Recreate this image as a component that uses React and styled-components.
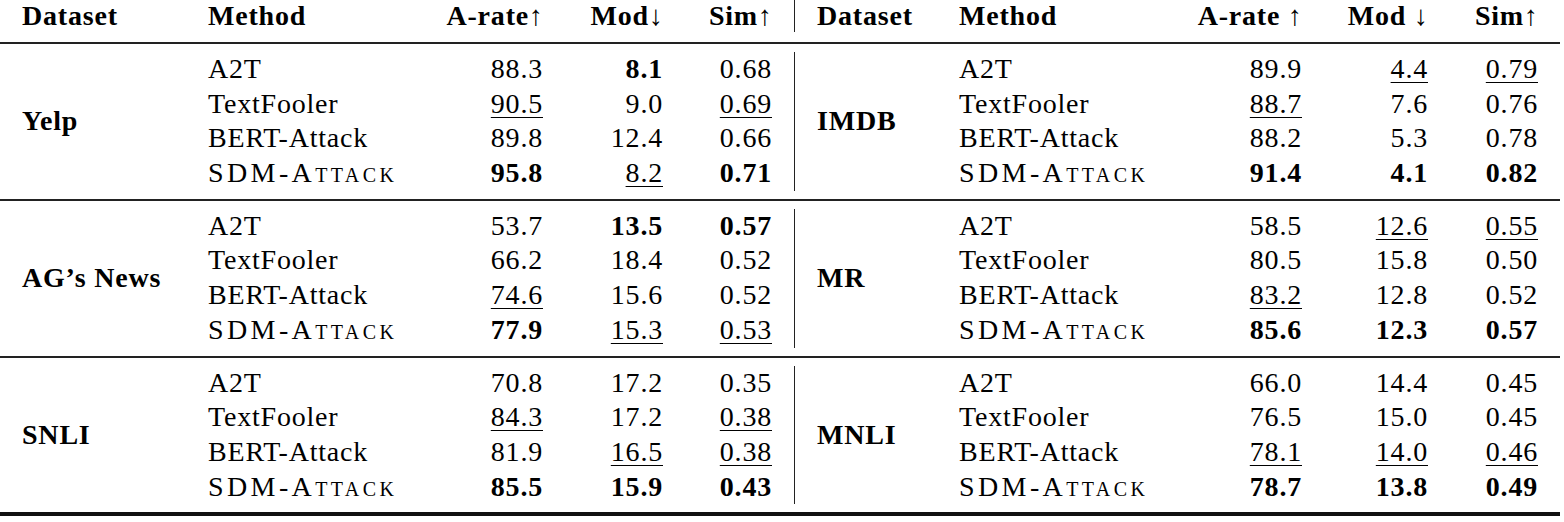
import React from "react";
import styled, { createGlobalStyle, css } from "styled-components";

const Global = createGlobalStyle`
  html, body { margin: 0; padding: 0; background: #fff; }
  body { font-family: "Liberation Serif", "Times New Roman", Times, serif; color: #000; }
`;

const Table = styled.div`
  width: 1560px;
  font-family: "Liberation Serif", "Times New Roman", Times, serif;
  font-size: 28px;
  letter-spacing: 0.8px;
  color: #000;
`;

const Row = styled.div`
  display: grid;
  grid-template-columns: 794px 766px;
  padding: ${(p) => (p.$header ? "0 0 10px" : "8px 0")};
  border-bottom: ${(p) => (p.$last ? "4px solid #111" : "2px solid #222")};
`;

const templates = {
  left: css`
    grid-template-columns: 186px 220px 115px 120px 109px;
    padding: 0 22px;
  `,
  right: css`
    grid-template-columns: 142px 231px 112px 126px 110px;
    padding: 0 22px 0 22px;
    border-left: 1.3px solid #222;
  `,
};

const Half = styled.div`
  display: grid;
  grid-auto-rows: ${(p) => (p.$header ? "32px" : "34.7px")};
  line-height: ${(p) => (p.$header ? "32px" : "34.7px")};
  ${(p) => templates[p.$side]}
`;

const HeadCell = styled.div`
  font-weight: bold;
  white-space: nowrap;
  text-align: ${(p) => (p.$num ? "right" : "left")};
`;

const Arrow = styled.span`
  font-weight: normal;
  letter-spacing: 0;
`;

const DatasetLabel = styled.div`
  grid-column: 1;
  grid-row: 1 / span 4;
  align-self: center;
  font-weight: bold;
  white-space: nowrap;
`;

const Method = styled.div`
  grid-column: 2;
  white-space: nowrap;
  ${(p) =>
    p.$sc &&
    css`
      font-variant: small-caps;
      letter-spacing: 3.4px;
    `}
`;

const Num = styled.div`
  text-align: right;
  white-space: nowrap;
`;

const Value = styled.span`
  font-weight: ${(p) => (p.$bold ? "bold" : "normal")};
  text-decoration: ${(p) => (p.$under ? "underline" : "none")};
  text-decoration-thickness: 1.3px;
  text-underline-offset: 4px;
`;

const methods = ["A2T", "TextFooler", "BERT-Attack", "SDM-Attack"];

const sections = [
  {
    left: {
      name: "Yelp",
      rows: [
        ["88.3", "*8.1", "0.68"],
        ["_90.5", "9.0", "_0.69"],
        ["89.8", "12.4", "0.66"],
        ["*95.8", "_8.2", "*0.71"],
      ],
    },
    right: {
      name: "IMDB",
      rows: [
        ["89.9", "_4.4", "_0.79"],
        ["_88.7", "7.6", "0.76"],
        ["88.2", "5.3", "0.78"],
        ["*91.4", "*4.1", "*0.82"],
      ],
    },
  },
  {
    left: {
      name: "AG\u2019s News",
      rows: [
        ["53.7", "*13.5", "*0.57"],
        ["66.2", "18.4", "0.52"],
        ["_74.6", "15.6", "0.52"],
        ["*77.9", "_15.3", "_0.53"],
      ],
    },
    right: {
      name: "MR",
      rows: [
        ["58.5", "_12.6", "_0.55"],
        ["80.5", "15.8", "0.50"],
        ["_83.2", "12.8", "0.52"],
        ["*85.6", "*12.3", "*0.57"],
      ],
    },
  },
  {
    left: {
      name: "SNLI",
      rows: [
        ["70.8", "17.2", "0.35"],
        ["_84.3", "17.2", "_0.38"],
        ["81.9", "_16.5", "_0.38"],
        ["*85.5", "*15.9", "*0.43"],
      ],
    },
    right: {
      name: "MNLI",
      rows: [
        ["66.0", "14.4", "0.45"],
        ["76.5", "15.0", "0.45"],
        ["_78.1", "_14.0", "_0.46"],
        ["*78.7", "*13.8", "*0.49"],
      ],
    },
  },
];

function Cell({ v }) {
  const bold = v.startsWith("*");
  const under = v.startsWith("_");
  const text = bold || under ? v.slice(1) : v;
  return (
    <Num>
      <Value $bold={bold} $under={under}>
        {text}
      </Value>
    </Num>
  );
}

function Block({ side, data }) {
  return (
    <Half $side={side}>
      <DatasetLabel>{data.name}</DatasetLabel>
      {data.rows.map((r, i) => (
        <React.Fragment key={i}>
          <Method $sc={i === 3}>{methods[i]}</Method>
          {r.map((v, j) => (
            <Cell key={j} v={v} />
          ))}
        </React.Fragment>
      ))}
    </Half>
  );
}

function Header({ side, spaced }) {
  const sp = spaced ? " " : "";
  return (
    <Half $side={side} $header>
      <HeadCell>Dataset</HeadCell>
      <HeadCell>Method</HeadCell>
      <HeadCell $num>
        A-rate{sp}
        <Arrow>↑</Arrow>
      </HeadCell>
      <HeadCell $num>
        Mod{sp}
        <Arrow>↓</Arrow>
      </HeadCell>
      <HeadCell $num>
        Sim<Arrow>↑</Arrow>
      </HeadCell>
    </Half>
  );
}

export default function App() {
  return (
    <>
      <Global />
      <Table>
        <Row $header>
          <Header side="left" />
          <Header side="right" spaced />
        </Row>
        {sections.map((s, i) => (
          <Row key={i} $last={i === sections.length - 1}>
            <Block side="left" data={s.left} />
            <Block side="right" data={s.right} />
          </Row>
        ))}
      </Table>
    </>
  );
}
